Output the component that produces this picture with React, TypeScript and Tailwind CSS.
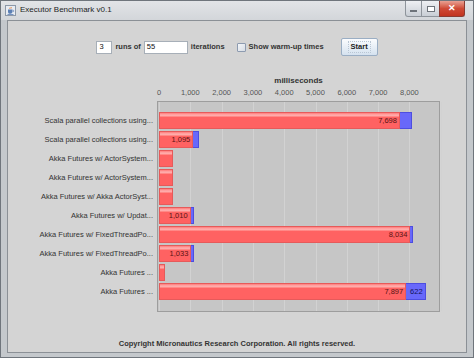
import React from 'react'

type Row = { label: string; red: number; blue: number; redText?: string; blueText?: string }

const rows: Row[] = [
  { label: 'Scala parallel collections using...', red: 7698, blue: 380, redText: '7,698' },
  { label: 'Scala parallel collections using...', red: 1095, blue: 170, redText: '1,095' },
  { label: 'Akka Futures w/ ActorSystem...', red: 440, blue: 0 },
  { label: 'Akka Futures w/ ActorSystem...', red: 440, blue: 0 },
  { label: 'Akka Futures w/ Akka ActorSyst...', red: 440, blue: 0 },
  { label: 'Akka Futures w/ Updat...', red: 1010, blue: 30, redText: '1,010' },
  { label: 'Akka Futures w/ FixedThreadPo...', red: 8034, blue: 50, redText: '8,034' },
  { label: 'Akka Futures w/ FixedThreadPo...', red: 1033, blue: 40, redText: '1,033' },
  { label: 'Akka Futures ...', red: 200, blue: 0 },
  { label: 'Akka Futures ...', red: 7897, blue: 622, redText: '7,897', blueText: '622' },
]

const ticks = [0, 1000, 2000, 3000, 4000, 5000, 6000, 7000, 8000]
const PX = 0.0313 // pixels per millisecond
const OFFSET = 1 // first tick inside the plot border

function JavaIcon() {
  return (
    <svg width="11" height="11" viewBox="0 0 11 11">
      <rect x="0.5" y="0.5" width="10" height="10" fill="#e8ecf2" stroke="#8c98a8" />
      <path d="M3 4.5h4.2v2.6a1.6 1.6 0 0 1-1.6 1.6H4.6A1.6 1.6 0 0 1 3 7.1z" fill="#5b7fb4" />
      <path d="M7.2 5.2h0.8a0.8 0.8 0 0 1 0 1.6h-0.8" fill="none" stroke="#5b7fb4" strokeWidth="0.7" />
      <path d="M4.5 3.8c0-0.8 0.8-0.8 0.8-1.6M5.8 3.8c0-0.8 0.8-0.8 0.8-1.6" stroke="#e0782c" strokeWidth="0.7" fill="none" />
      <rect x="2.5" y="9" width="6" height="0.8" fill="#5b7fb4" />
    </svg>
  )
}

function TitleBar() {
  return (
    <div className="h-[19px] flex items-start bg-gradient-to-b from-[#e2e4e7] to-[#d3d6da]">
      <div className="flex items-center h-[18px] pl-[4px] gap-[4px]">
        <JavaIcon />
        <span className="text-[8px] leading-none text-[#1e1e1e]">Executor Benchmark v0.1</span>
      </div>
      <div className="ml-auto mr-[8px] flex">
        <div className="w-[17px] h-[16px] border border-[#8e949b] border-t-0 rounded-bl-[3px] bg-gradient-to-b from-[#eef0f3] to-[#c9ced5] flex items-center justify-center">
          <div className="w-[7px] h-[2px] mt-[5px] bg-white border border-[#6d737a]" />
        </div>
        <div className="w-[17px] h-[16px] border-b border-[#8e949b] bg-gradient-to-b from-[#eef0f3] to-[#c9ced5] flex items-center justify-center">
          <div className="w-[8px] h-[6px] border-[1.5px] border-[#6d737a] bg-white" />
        </div>
        <div className="w-[26px] h-[16px] border border-[#8b3b32] border-t-0 rounded-br-[3px] bg-gradient-to-b from-[#e8a093] via-[#cf4a36] to-[#c2331f] flex items-center justify-center">
          <span className="text-[9px] leading-none font-bold text-white">✕</span>
        </div>
      </div>
    </div>
  )
}

function Controls() {
  return (
    <div className="mt-[17px] h-[18px] flex items-center justify-center text-[7.5px] text-[#333]">
      <div className="w-[16px] h-[13px] bg-white border border-[#a7afb8] flex items-center pl-[2px] text-[#111]">3</div>
      <span className="ml-[3px] font-bold">runs of</span>
      <div className="ml-[3px] w-[44px] h-[13px] bg-white border border-[#a7afb8] flex items-center pl-[2px] text-[#111]">55</div>
      <span className="ml-[3px] font-bold">iterations</span>
      <div className="ml-[12px] w-[9px] h-[9px] rounded-[1px] border border-[#8d9bb0] bg-gradient-to-br from-[#f4f6f9] to-[#d6dce4]" />
      <span className="ml-[3px] font-bold">Show warm-up times</span>
      <div className="ml-[17px] w-[37px] h-[18px] rounded-[2px] border border-[#9aaec4] bg-gradient-to-b from-[#fbfcfe] to-[#d5e2ef] flex items-center justify-center">
        <div className="px-[2px] h-[12px] border border-dotted border-[#b9c6d4] flex items-center font-bold text-[#222]">Start</div>
      </div>
    </div>
  )
}

function Chart() {
  return (
    <div className="flex flex-col">
      <div className="mt-[20px] flex">
        <div className="w-[145px]" />
        <div className="ml-[4px] w-[283px]">
          <div className="h-[10px] flex items-center justify-center text-[8px] font-bold text-[#333] leading-none">
            milliseconds
          </div>
          <div className="relative h-[10px] mt-[2px]">
            {ticks.map((t) => (
              <span
                key={t}
                className="absolute top-0 -translate-x-1/2 text-[7.5px] leading-[10px] text-[#555]"
                style={{ left: OFFSET + 1 + t * PX }}
              >
                {t.toLocaleString('en-US')}
              </span>
            ))}
          </div>
        </div>
      </div>

      <div className="mt-[3px] flex">
        {/* row labels */}
        <div className="w-[145px] pt-[10px] flex flex-col">
          {rows.map((r, i) => (
            <div key={i} className="h-[19px] flex items-center justify-end text-[7.5px] text-[#333] whitespace-nowrap">
              {r.label}
            </div>
          ))}
        </div>

        {/* plot */}
        <div className="ml-[4px] w-[283px] h-[211px] relative border border-[#9d9d9d] bg-[#c6c6c6]">
          {ticks.map((t) => (
            <div key={t} className="absolute top-0 bottom-0 w-px bg-[#d2d2d2]" style={{ left: OFFSET + t * PX }} />
          ))}
          <div className="absolute top-0 bottom-0 w-px bg-[#d2d2d2]" style={{ left: OFFSET + 9000 * PX }} />
          <div className="relative pt-[9px] flex flex-col">
            {rows.map((r, i) => (
              <div key={i} className="h-[19px] flex items-center" style={{ paddingLeft: OFFSET }}>
                <div
                  className="h-[17px] border border-[#e65a5a] bg-gradient-to-b from-[#ff7a7a] via-[#ffb3b3] via-15% to-[#ff6262] to-30% flex items-center justify-end pr-[2px] overflow-hidden"
                  style={{ width: r.red * PX }}
                >
                  {r.redText && <span className="text-[7.5px] text-[#5a1414] leading-none">{r.redText}</span>}
                </div>
                {r.blue > 0 && (
                  <div
                    className="h-[17px] bg-[#6868fa] border-y border-r border-[#4d4de0] flex items-center justify-end pr-[2px] overflow-hidden"
                    style={{ width: Math.max(1, r.blue * PX) }}
                  >
                    {r.blueText && <span className="text-[7.5px] text-[#14145a] leading-none">{r.blueText}</span>}
                  </div>
                )}
              </div>
            ))}
          </div>
        </div>
      </div>
    </div>
  )
}

export default function App() {
  return (
    <div className="w-[474px] h-[358px] flex flex-col bg-[#c4c8cc] border border-[#6f757c] font-['Liberation_Sans',Arial,sans-serif] overflow-hidden">
      <TitleBar />
      <div className="ml-[6px] w-[460px] h-[333px] border border-[#8b9096] bg-[#d4d4d4] flex flex-col">
        <Controls />
        <Chart />
        <div className="mt-[27px] h-[10px] flex items-center justify-center text-[7.5px] font-bold text-[#333]">
          Copyright Micronautics Research Corporation. All rights reserved.
        </div>
      </div>
    </div>
  )
}
